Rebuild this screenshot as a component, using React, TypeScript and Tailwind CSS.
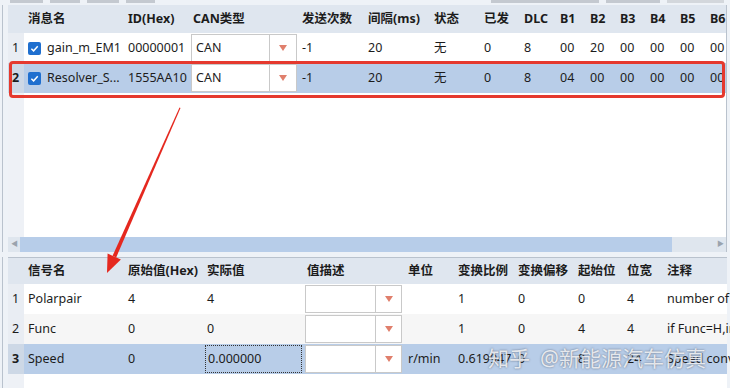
import React from "react";

const FONT = "font-['Noto_Sans','Noto_Sans_CJK_SC',sans-serif]";

// top grid columns: [label, width]
const topCols: [string, number][] = [
  ["消息名", 100],
  ["ID(Hex)", 65],
  ["CAN类型", 109],
  ["发送次数", 66],
  ["间隔(ms)", 66],
  ["状态", 50],
  ["已发", 40],
  ["DLC", 36],
  ["B1", 30],
  ["B2", 30],
  ["B3", 30],
  ["B4", 30],
  ["B5", 30],
  ["B6", 30],
];

const messages = [
  { name: "gain_m_EM1", id: "00000001", cnt: "-1", gap: "20", st: "无", sent: "0", dlc: "8", b: ["00", "20", "00", "00", "00", "00"] },
  { name: "Resolver_S...", id: "1555AA10", cnt: "-1", gap: "20", st: "无", sent: "0", dlc: "8", b: ["04", "00", "00", "00", "00", "00"] },
];

const botCols: [string, number][] = [
  ["信号名", 100],
  ["原始值(Hex)", 79],
  ["实际值", 100],
  ["值描述", 101],
  ["单位", 50],
  ["变换比例", 60],
  ["变换偏移", 60],
  ["起始位", 49],
  ["位宽", 40],
  ["注释", 120],
];

const signals = [
  { name: "Polarpair", raw: "4", val: "4", unit: "", k: "1", off: "0", start: "0", len: "4", note: "number of pole pairs" },
  { name: "Func", raw: "0", val: "0", unit: "", k: "1", off: "0", start: "4", len: "4", note: "if Func=H,inverse" },
  { name: "Speed", raw: "0", val: "0.000000", unit: "r/min", k: "0.619947", off: "0", start: "8", len: "24", note: "Speed conversion" },
];

function Combo({ text, w, split }: { text: string; w: number; split: number }) {
  return (
    <div
      className="flex h-[28px] items-center border border-[#c9c9c9] bg-white"
      style={{ width: w }}
    >
      <div className="pl-[4px]" style={{ width: split }}>
        {text}
      </div>
      <div className="flex h-full flex-1 items-center justify-center border-l border-[#c9c9c9]">
        <div className="h-0 w-0 border-x-[4px] border-t-[6px] border-x-transparent border-t-[#e07f6c]" />
      </div>
    </div>
  );
}

function Check() {
  return (
    <div className="flex h-[13px] w-[13px] shrink-0 items-center justify-center rounded-[2px] bg-[#1f6fcf]">
      <svg width="9" height="9" viewBox="0 0 10 10">
        <path d="M1.5 5.2 L4 7.6 L8.6 2.4" fill="none" stroke="white" strokeWidth="1.6" />
      </svg>
    </div>
  );
}

function Cell({ w, children, className = "" }: { w: number; children?: React.ReactNode; className?: string }) {
  return (
    <div className={`flex h-full shrink-0 items-center pl-[4px] whitespace-nowrap overflow-hidden ${className}`} style={{ width: w }}>
      {children}
    </div>
  );
}

export default function App() {
  return (
    <div className={`relative h-[388px] w-[730px] overflow-hidden bg-[#eef2f7] text-[12.5px] text-[#1c1c1c] ${FONT}`}>
      {/* toolbar buttons peeking at top */}
      <div className="flex h-[5px] gap-[7px] pl-[10px]">
        <div className="h-[3px] w-[33px] bg-[#c4c9d0]" />
        <div className="h-[3px] w-[30px] bg-[#c4c9d0]" />
        <div className="h-[3px] w-[32px] bg-[#c4c9d0]" />
        <div className="h-[3px] w-[29px] bg-[#c4c9d0]" />
        <div className="ml-[329px] h-[3px] w-[108px] bg-[#c4c9d0]" />
        <div className="h-[3px] w-[54px] bg-[#c4c9d0]" />
        <div className="h-[3px] w-[57px] bg-[#d3d7dc]" />
      </div>

      {/* top panel */}
      <div className="flex h-[247px]">
        <div className="w-[8px] shrink-0 pl-[2px]">
          <div className="h-full w-[1px] bg-[#b9c2cd]" />
        </div>
        <div className="flex w-[719px] flex-col border-r border-[#b9c2cd] bg-white">
          <div className="flex h-[28px] shrink-0 bg-[#dfe6ef] pt-[1px] font-bold">
            <div className="w-[16px] shrink-0" />
            {topCols.map(([l, w], i) => (
              <Cell key={i} w={w}>
                {l}
              </Cell>
            ))}
          </div>
          {messages.map((m, r) => {
            const sel = r === 1;
            return (
              <div key={r} className={`flex h-[30px] shrink-0 ${sel ? "bg-[#b8cde8]" : "bg-white"}`}>
                <div className={`flex w-[16px] shrink-0 items-center pl-[4px] ${sel ? "bg-[#cdd8e6] font-bold" : "bg-[#e9edf3]"}`}>
                  {r + 1}
                </div>
                <Cell w={100} className="gap-[6px]">
                  <Check />
                  <span>{m.name}</span>
                </Cell>
                <Cell w={65}>{m.id}</Cell>
                <div className="flex h-full w-[109px] shrink-0 items-center pl-[2px]">
                  <Combo text="CAN" w={106} split={77} />
                </div>
                <Cell w={66}>{m.cnt}</Cell>
                <Cell w={66}>{m.gap}</Cell>
                <Cell w={50}>{m.st}</Cell>
                <Cell w={40}>{m.sent}</Cell>
                <Cell w={36}>{m.dlc}</Cell>
                {m.b.map((b, i) => (
                  <Cell key={i} w={30}>
                    {b}
                  </Cell>
                ))}
              </div>
            );
          })}
          <div className="flex flex-1">
            <div className="w-[16px] bg-[#eef1f6]" />
            <div className="flex-1 bg-white" />
          </div>
          {/* horizontal scrollbar */}
          <div className="flex h-[15px] shrink-0 items-center bg-[#dfe6ee] text-[#9aa3ad]">
            <div className="flex w-[12px] justify-end pr-[2px] text-[7px]">◀</div>
            <div className="h-full w-[652px] bg-[#b7cde9]" />
            <div className="flex-1" />
            <div className="pr-[2px] text-[7px]">▶</div>
          </div>
        </div>
      </div>

      <div className="h-[5px]" />

      {/* bottom panel */}
      <div className="flex h-[131px]">
        <div className="w-[8px] shrink-0 pl-[2px]">
          <div className="h-full w-[1px] bg-[#b9c2cd]" />
        </div>
        <div className="flex w-[719px] flex-col border-t border-[#b9c2cd] bg-white">
          <div className="flex h-[26px] shrink-0 bg-[#dfe6ef] font-bold">
            <div className="w-[16px] shrink-0" />
            {botCols.map(([l, w], i) => (
              <Cell key={i} w={w}>
                {l}
              </Cell>
            ))}
          </div>
          {signals.map((s, r) => {
            const sel = r === 2;
            const bg = sel ? "bg-[#b8cde8]" : r === 1 ? "bg-[#f6f6f6]" : "bg-white";
            return (
              <div key={r} className={`flex h-[30px] shrink-0 ${bg}`}>
                <div className={`flex w-[16px] shrink-0 items-center pl-[4px] ${sel ? "bg-[#cdd8e6] font-bold" : "bg-[#e9edf3]"}`}>
                  {r + 1}
                </div>
                <Cell w={100}>{s.name}</Cell>
                <Cell w={79}>{s.raw}</Cell>
                <div className="flex h-full w-[100px] shrink-0 items-center py-[1px] pl-[2px]">
                  <div className={`flex h-full w-[97px] items-center pl-[2px] ${sel ? "border border-dotted border-[#333]" : ""}`}>
                    {s.val}
                  </div>
                </div>
                <div className="flex h-full w-[101px] shrink-0 items-center pl-[2px]">
                  <Combo text="" w={97} split={69} />
                </div>
                <Cell w={50}>{s.unit}</Cell>
                <Cell w={60}>{s.k}</Cell>
                <Cell w={60}>{s.off}</Cell>
                <Cell w={49}>{s.start}</Cell>
                <Cell w={40}>{s.len}</Cell>
                <Cell w={120}>{s.note}</Cell>
              </div>
            );
          })}
          <div className="flex flex-1">
            <div className="w-[16px] bg-[#eef1f6]" />
            <div className="flex-1 bg-white" />
          </div>
        </div>
      </div>

      {/* red highlight around selected message */}
      <div className="absolute left-[9px] top-[61px] h-[37px] w-[716px] rounded-[4px] border-[3px] border-[#e5392e]" />

      {/* red arrow annotation */}
      <svg className="absolute left-0 top-0" width="730" height="388" viewBox="0 0 730 388">
        <polygon points="180.5,108 179.5,107.6 112.6,255.8 116.2,257.4" fill="#e5281f" />
        <polygon points="107,273 107.6,253.6 120.9,259.5" fill="#e5281f" />
      </svg>

      {/* watermark */}
      <div className="absolute left-[488px] top-[343px] flex text-[21px] leading-[30px] text-white/80 [text-shadow:0_0_2px_rgba(80,90,110,0.9)] whitespace-nowrap">
        <span>知乎</span>
        <span className="ml-[10px]">@新能源汽车仿真</span>
      </div>
    </div>
  );
}
